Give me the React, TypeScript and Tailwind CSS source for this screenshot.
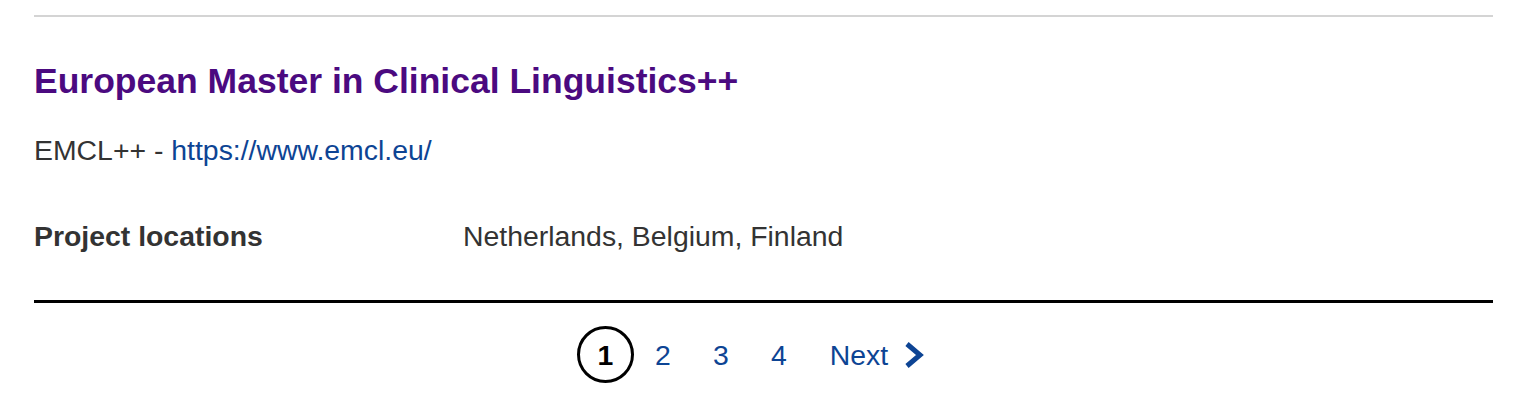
import React from 'react';

function ChevronRight() {
  return (
    <svg width="22" height="28" viewBox="0 0 22 28" fill="none" aria-hidden="true">
      <path d="M4 3l13 11-13 11" stroke="#0d4494" strokeWidth="5" strokeLinejoin="miter" />
    </svg>
  );
}

export default function App() {
  const pages = [2, 3, 4];

  return (
    <div
      className="bg-white w-[1536px] h-[401px] overflow-hidden text-[#333333]"
      style={{ fontFamily: '"Liberation Sans", Arial, sans-serif' }}
    >
      <div className="ml-[34px] w-[1459px] pt-[15px]">
        {/* Top separator */}
        <div className="h-[2px] bg-[#d4d4d4]" />

        {/* Result card */}
        <h2 className="mt-[43px] text-[35.5px] leading-[42px] font-bold text-[#4b0a80]">
          European Master in Clinical Linguistics++
        </h2>
        <p className="mt-[31px] text-[28.4px] leading-[34px]">
          EMCL++ -{' '}
          <a href="#" className="text-[#0d4494]">
            https://www.emcl.eu/
          </a>
        </p>
        <div className="mt-[52px] flex text-[28.4px] leading-[34px]">
          <div className="w-[429px] font-bold">Project locations</div>
          <div>Netherlands, Belgium, Finland</div>
        </div>

        {/* Bottom separator */}
        <div className="mt-[47px] h-[3px] bg-black" />

        {/* Pagination */}
        <nav className="mt-[23px] pr-[25px] flex items-center justify-center text-[28.4px] leading-[34px]">
          <span className="w-[57px] h-[57px] rounded-full border-[3px] border-black flex items-center justify-center font-bold text-black">
            1
          </span>
          {pages.map((p) => (
            <a key={p} href="#" className="w-[58px] text-center text-[#0d4494]">
              {p}
            </a>
          ))}
          <a href="#" className="ml-[22px] flex items-center gap-[15px] text-[#0d4494]">
            Next
            <ChevronRight />
          </a>
        </nav>
      </div>
    </div>
  );
}
